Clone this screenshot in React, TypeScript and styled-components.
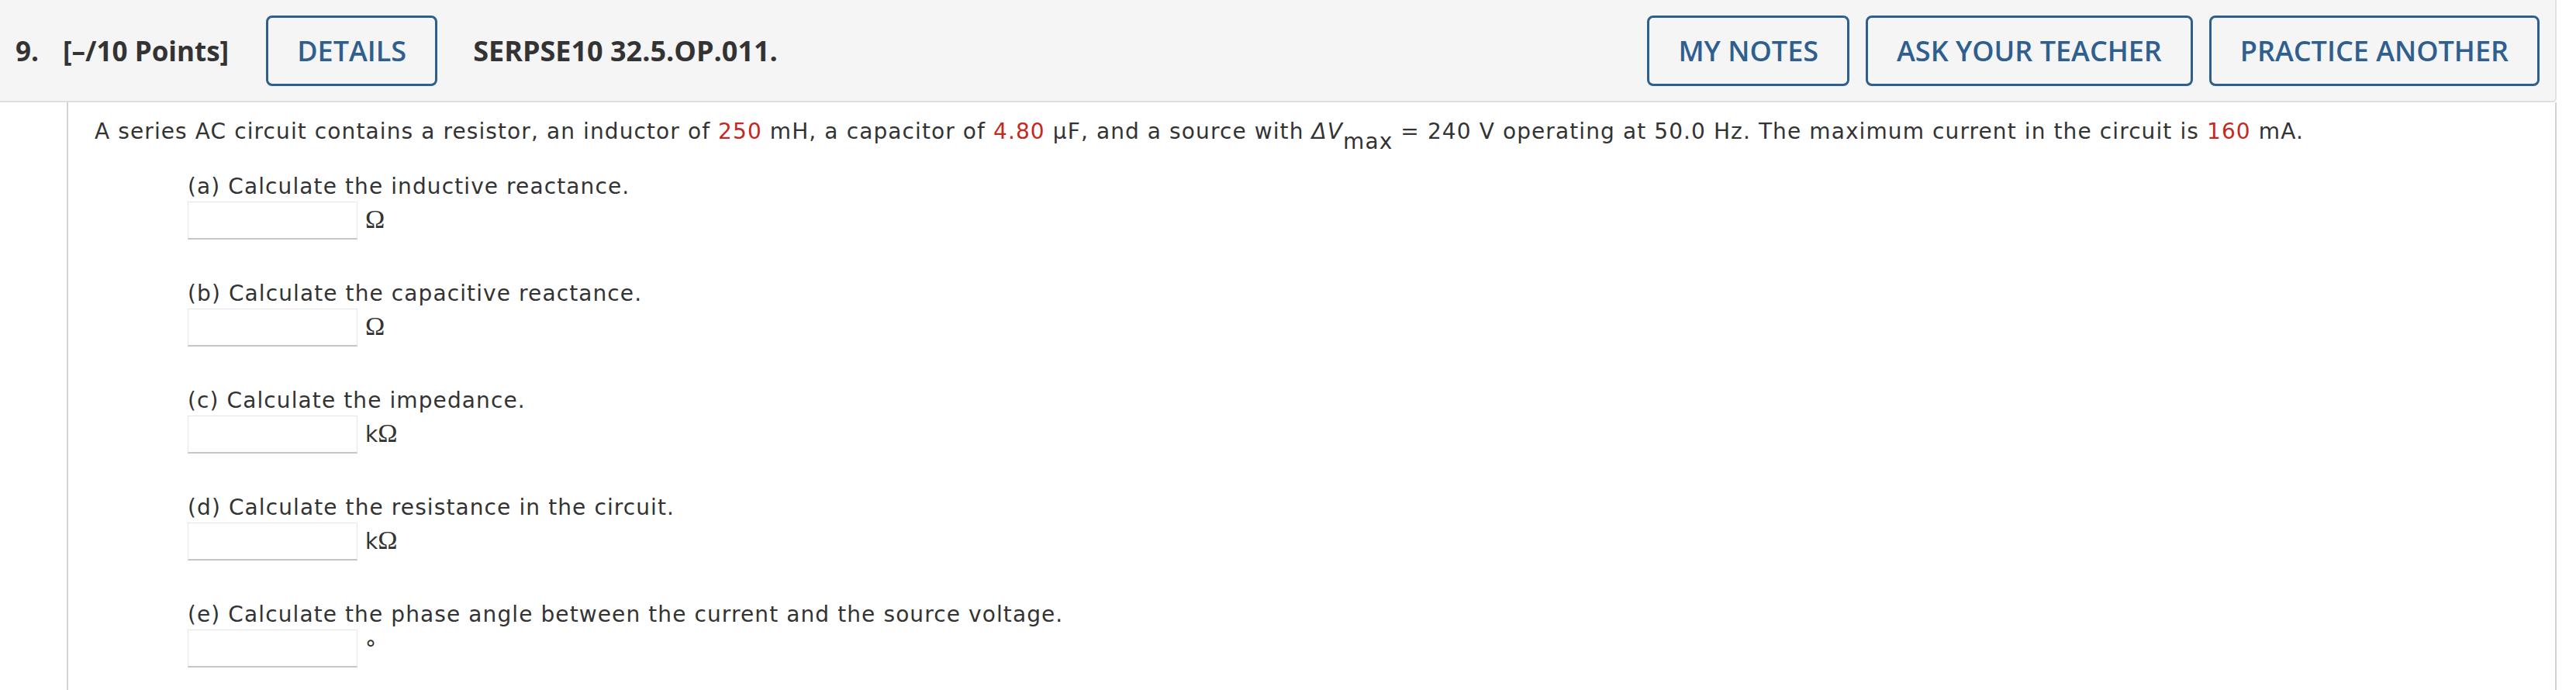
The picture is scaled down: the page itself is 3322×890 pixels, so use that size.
import React from 'react';
import styled, {createGlobalStyle} from 'styled-components';

const GlobalStyle = createGlobalStyle`
  body {
    margin: 0;
    background: #ffffff;
    font-family: "DejaVu Sans", Verdana, sans-serif;
    color: #333333;
  }
`;

const Page = styled.div`
  width: 3297px;
`;

const Header = styled.header`
  display: flex;
  align-items: center;
  height: 130px;
  padding: 0 20px;
  background-color: #f5f5f5;
  border-bottom: 2px solid #dedede;
  border-right: 2px solid #e2e2e2;
  border-bottom-right-radius: 5px;
  font-family: "Open Sans", "Liberation Sans", sans-serif;
  font-size: 35px;
  font-weight: 700;
  color: #333333;
`;

const Number = styled.span`
  margin-right: 31px;
`;

const Points = styled.span`
  margin-right: 48px;
`;

const Code = styled.span`
  margin-left: 46px;
  font-size: 36px;
`;

const Actions = styled.div`
  display: flex;
  gap: 21px;
  margin-left: auto;
`;

const Button = styled.button`
  height: 91px;
  padding: 0 37px;
  background: transparent;
  border: 3px solid #2f5f8e;
  border-radius: 8px;
  font-family: "Open Sans", "Liberation Sans", sans-serif;
  font-size: 36px;
  font-weight: 600;
  color: #2f5f8e;
  cursor: pointer;
`;

const Body = styled.section`
  margin-left: 86px;
  min-height: 760px;
  padding: 17px 34px 40px;
  border-left: 2px solid #d2d2d2;
  border-right: 2px solid #d2d2d2;
  font-size: 28px;
  letter-spacing: 1.1px;
`;

const Statement = styled.p`
  margin: 0;
  line-height: 42px;
`;

const Value = styled.span`
  color: #c4281f;
`;

const Sub = styled.sub`
  font-size: inherit;
  vertical-align: -13px;
  line-height: 0;
`;

const Parts = styled.div`
  display: flex;
  flex-direction: column;
  gap: 53px;
  margin-top: 33px;
  padding-left: 120px;
`;

const Part = styled.div``;

const Prompt = styled.div`
  line-height: 34px;
`;

const AnswerRow = styled.div`
  margin-top: 2px;
  display: flex;
  align-items: baseline;
  gap: 10px;
`;

const Field = styled.input`
  box-sizing: border-box;
  width: 219px;
  height: 49px;
  padding: 0 8px;
  border: 1px solid #e6e6e6;
  border-bottom: 2px solid #c6c6c6;
  font-family: "DejaVu Sans", sans-serif;
  font-size: 28px;
  color: #333333;
  background: #ffffff;
  outline: none;
`;

const Unit = styled.span`
  font-size: 28px;
  letter-spacing: 0;
`;

const Ohm = styled.span`
  font-family: "Liberation Serif", "DejaVu Serif", serif;
  font-size: 34px;
`;

const parts = [
    {label: '(a) Calculate the inductive reactance.', prefix: '', ohm: true},
    {label: '(b) Calculate the capacitive reactance.', prefix: '', ohm: true},
    {label: '(c) Calculate the impedance.', prefix: 'k', ohm: true},
    {label: '(d) Calculate the resistance in the circuit.', prefix: 'k', ohm: true},
    {label: '(e) Calculate the phase angle between the current and the source voltage.', prefix: '°', ohm: false},
];

export default function App() {
    return (
        <Page>
            <GlobalStyle/>
            <Header>
                <Number>9.</Number>
                <Points>[–/10 Points]</Points>
                <Button>DETAILS</Button>
                <Code>SERPSE10 32.5.OP.011.</Code>
                <Actions>
                    <Button>MY NOTES</Button>
                    <Button>ASK YOUR TEACHER</Button>
                    <Button>PRACTICE ANOTHER</Button>
                </Actions>
            </Header>
            <Body>
                <Statement>
                    A series AC circuit contains a resistor, an inductor of <Value>250</Value> mH, a capacitor
                    of <Value>4.80</Value> µF, and a source with <i>ΔV</i><Sub>max</Sub> = 240 V operating at 50.0 Hz.
                    The maximum current in the circuit is <Value>160</Value> mA.
                </Statement>
                <Parts>
                    {parts.map(p => (
                        <Part key={p.label}>
                            <Prompt>{p.label}</Prompt>
                            <AnswerRow>
                                <Field type="text"/>
                                <Unit>
                                    {p.prefix}
                                    {p.ohm && <Ohm>Ω</Ohm>}
                                </Unit>
                            </AnswerRow>
                        </Part>
                    ))}
                </Parts>
            </Body>
        </Page>
    );
}
